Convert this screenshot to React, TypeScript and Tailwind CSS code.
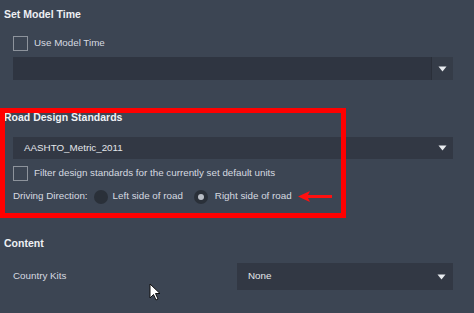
import React from 'react';

const font = { fontFamily: '"Liberation Sans", Arial, sans-serif' };

function Caret() {
  return (
    <svg width="9" height="6" viewBox="0 0 9 6" className="block">
      <path d="M0.5 0.5 H8.5 L4.5 5.5 Z" fill="#e8ebef" />
    </svg>
  );
}

function Checkbox() {
  return <div className="w-[15px] h-[15px] border border-[#8d939c] bg-[#3c4553]" />;
}

function Radio({ checked }: { checked?: boolean }) {
  return (
    <div className="w-[14px] h-[14px] rounded-full bg-[#2a3039] flex items-center justify-center">
      {checked && <div className="w-[6px] h-[6px] rounded-full bg-[#b9bec6]" />}
    </div>
  );
}

function Section({ title, children }: { title: string; children: React.ReactNode }) {
  return (
    <div>
      <div className="pl-[4px] text-[10.5px] font-bold text-[#eef0f3] leading-[14px]">{title}</div>
      {children}
    </div>
  );
}

export default function App() {
  return (
    <div className="relative w-[474px] h-[313px] overflow-hidden bg-[#3c4553] text-[#d6dae0] text-[9.8px]" style={font}>
      <div className="pt-[7px] pr-[21px]">
        <Section title="Set Model Time">
          <div className="pl-[13px] mt-[15px] flex items-center gap-[6px] h-[15px]">
            <Checkbox />
            <span>Use Model Time</span>
          </div>
          <div className="ml-[13px] mt-[6px] h-[23px] bg-[#2f3541] flex justify-end">
            <div className="w-[22px] h-full bg-[#353c48] border-l border-[#2a2f39] flex items-center justify-center">
              <Caret />
            </div>
          </div>
        </Section>

        <div className="mt-[30px]">
          <Section title="Road Design Standards">
            <div className="ml-[13px] mt-[13px] h-[22px] bg-[#323844] flex items-center justify-between pl-[11px] pr-[6px]">
              <span className="text-[#e4e7eb]">AASHTO_Metric_2011</span>
              <Caret />
            </div>
            <div className="pl-[13px] mt-[7px] flex items-center gap-[6px] h-[15px]">
              <Checkbox />
              <span>Filter design standards for the currently set default units</span>
            </div>
            <div className="pl-[13px] mt-[8px] flex items-center h-[15px]">
              <span>Driving Direction:</span>
              <div className="ml-[6px] flex items-center gap-[5px]">
                <Radio />
                <span>Left side of road</span>
              </div>
              <div className="ml-[11px] flex items-center gap-[7px]">
                <Radio checked />
                <span>Right side of road</span>
              </div>
            </div>
          </Section>
        </div>

        <div className="mt-[32px]">
          <Section title="Content">
            <div className="pl-[13px] mt-[13px] flex items-center justify-between">
              <span>Country Kits</span>
              <div className="w-[216px] h-[27px] bg-[#323844] flex items-center justify-between pl-[11px] pr-[7px]">
                <span className="text-[#e4e7eb]">None</span>
                <Caret />
              </div>
            </div>
          </Section>
        </div>
      </div>

      {/* annotation overlay */}
      <div className="absolute left-0 top-[108px] w-[346px] h-[110px] border-[5px] border-[#ff0000]" />
      <svg className="absolute left-[297px] top-[190px]" width="36" height="13" viewBox="0 0 36 13">
        <path d="M1 6.5 L13 1 L11 5 H35 V8 H11 L13 12 Z" fill="#ff1010" />
      </svg>

      {/* mouse cursor */}
      <svg className="absolute left-[149px] top-[283px]" width="12" height="19" viewBox="0 0 12 19">
        <path d="M1 1 V15 L4.5 11.5 L7 17 L9 16 L6.5 10.5 H11 Z" fill="#ffffff" stroke="#111" strokeWidth="1" />
      </svg>
    </div>
  );
}
